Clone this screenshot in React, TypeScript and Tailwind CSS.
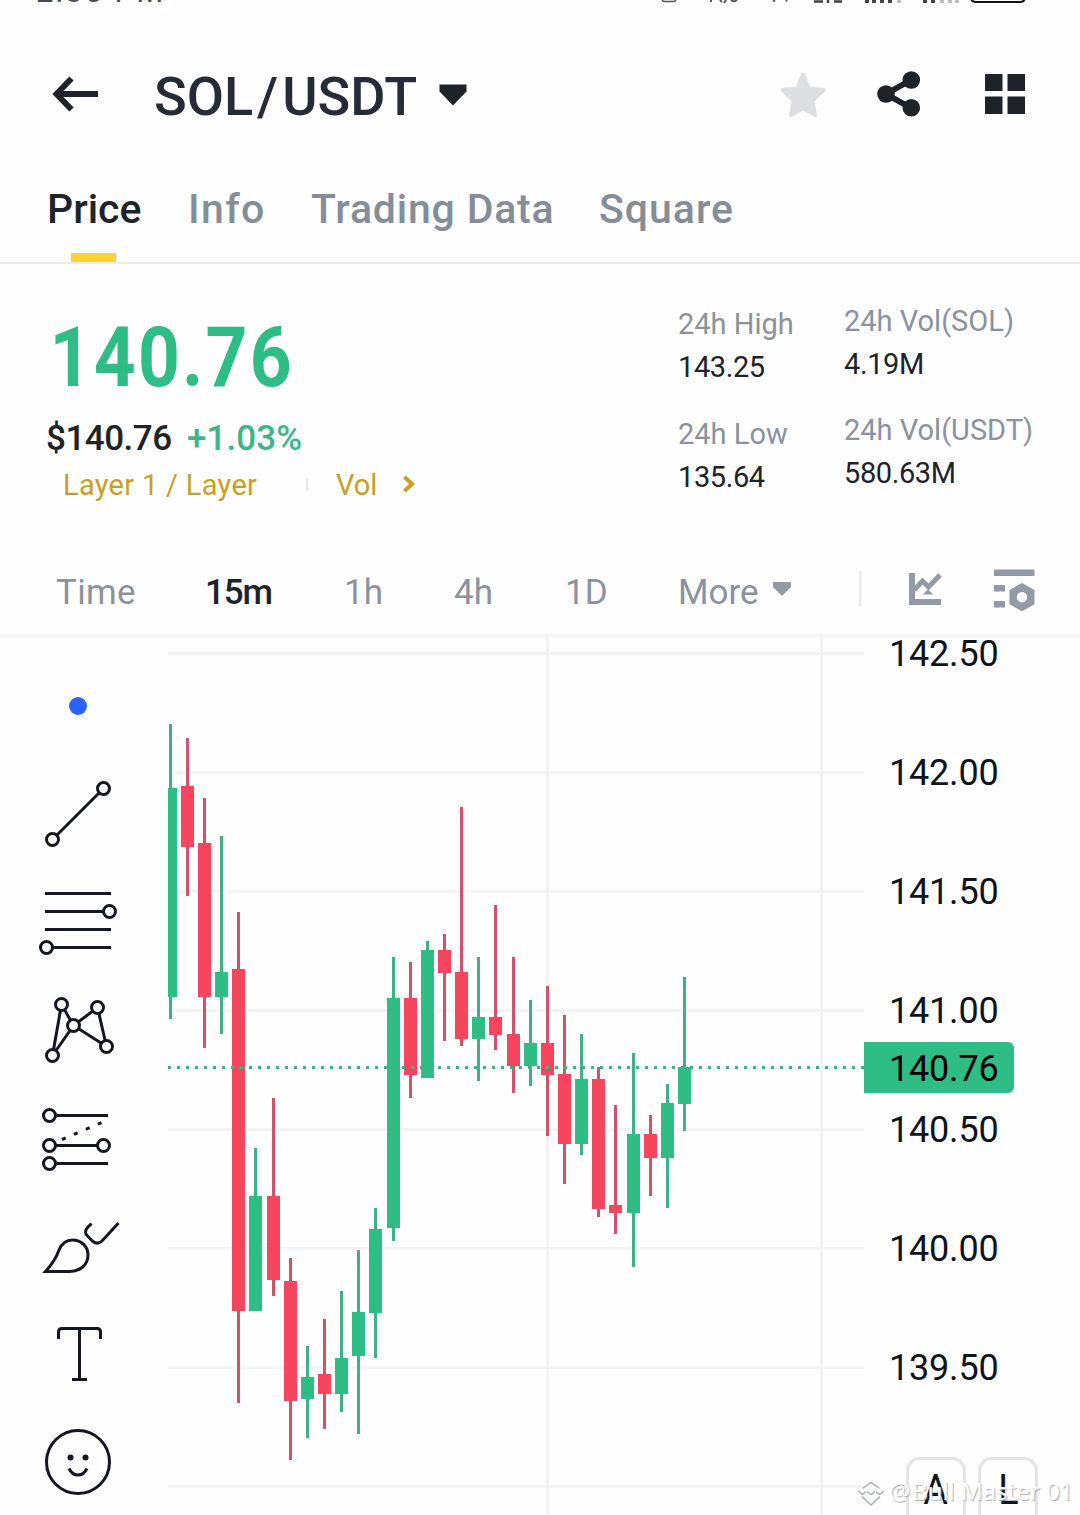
import { useState, type ReactNode } from 'react';
import clsx from 'clsx';

type Candle = { x: number; high: number; top: number; bottom: number; low: number; up: boolean };

const raw: [number, number, number, number, number, number][] = [
  [170.5, 724, 788, 997, 1019, 1],
  [187.5, 738, 786, 847, 896, 0],
  [204.5, 798, 843, 997, 1048, 0],
  [221.5, 836, 972, 997, 1034, 1],
  [238.5, 912, 969, 1311, 1403, 0],
  [255.5, 1148, 1196, 1311, 1311, 1],
  [273.5, 1098, 1196, 1280, 1296, 0],
  [290.5, 1258, 1281, 1401, 1460, 0],
  [307.5, 1346, 1377, 1399, 1438, 1],
  [324.5, 1319, 1374, 1394, 1429, 0],
  [341.5, 1291, 1358, 1394, 1412, 1],
  [358.5, 1250, 1312, 1356, 1434, 1],
  [375.5, 1208, 1229, 1313, 1358, 1],
  [393.5, 957, 998, 1228, 1241, 1],
  [410.5, 962, 998, 1075, 1098, 0],
  [427.5, 941, 950, 1078, 1078, 1],
  [444.5, 934, 950, 973, 1041, 0],
  [461.5, 807, 972, 1039, 1046, 0],
  [478.5, 957, 1017, 1039, 1081, 1],
  [495.5, 905, 1017, 1035, 1050, 0],
  [513.5, 957, 1034, 1066, 1093, 0],
  [530.5, 1000, 1043, 1066, 1086, 1],
  [547.5, 986, 1043, 1075, 1136, 0],
  [564.5, 1015, 1074, 1144, 1184, 0],
  [581.5, 1034, 1079, 1144, 1155, 1],
  [598.5, 1067, 1079, 1209, 1217, 0],
  [615.5, 1105, 1205, 1213, 1234, 0],
  [633.5, 1053, 1134, 1213, 1267, 1],
  [650.5, 1115, 1134, 1158, 1196, 0],
  [667.5, 1084, 1103, 1158, 1208, 1],
  [684.5, 977, 1067, 1104, 1131, 1],
];

const candles: Candle[] = raw.map(([x, high, top, bottom, low, up]) => ({ x, high, top, bottom, low, up: up === 1 }));

const gridLines = [652, 771, 890, 1009, 1128, 1247, 1366, 1485];
const priceLabels = ['142.50', '142.00', '141.50', '141.00', '140.50', '140.00', '139.50'];

const tabs = [
  { name: 'Price', className: 'w-[141px]' },
  { name: 'Info', className: 'w-[123px] tracking-[1.4px]' },
  { name: 'Trading Data', className: 'w-[288px] tracking-[0.8px]' },
  { name: 'Square', className: 'w-[145px] tracking-[1px]' },
];

const intervals = [
  { name: 'Time', className: 'w-[149px] tracking-[0.3px]' },
  { name: '15m', className: 'w-[139px] tracking-[-1.1px]' },
  { name: '1h', className: 'w-[110px]' },
  { name: '4h', className: 'w-[111px]' },
  { name: '1D', className: 'w-[113px]' },
];

export default function App() {
  return (
    <div className="relative flex h-[1515px] w-[1080px] flex-col overflow-hidden bg-[#fefefe] font-['Roboto',sans-serif] text-[#1e2329]">
      <StatusBar />
      <Header />
      <Tabs />
      <Summary />
      <Intervals />
      <section className="flex h-[877px] shrink-0">
        <DrawingTools />
        <CandleChart />
        <PriceAxis />
      </section>
      <Watermark />
    </div>
  );
}

function StatusBar() {
  return (
    <div className="flex h-2 shrink-0 items-start justify-between overflow-hidden pl-[36px] pr-[54px] text-[#4a4d52]">
      <span className="-mt-[25px] text-[31px] leading-[34px] tracking-[2.2px]">2:30 PM</span>
      <svg className="h-2 w-[366px]" viewBox="660 0 366 8" fill="none">
        <path d="M662 0q1 1.500 3 1.500h8q2 0 3-1.500" stroke="#55585d" strokeWidth="1.500" />
        <path d="M711 0v2M720 0l2 2M726 0l-2 3M731 0q3 2.500 6 0" stroke="#55585d" strokeWidth="2" />
        <path d="M773 0l2 1.500M787 0l-1 1.500" stroke="#55585d" strokeWidth="2" />
        <path d="M814 1.500h9M828 0v3M834 1.500h8" stroke="#3f4247" strokeWidth="2.500" />
        <path d="M867 0v3M874 0v3M882 0v3M890 0v3" stroke="#3f4247" strokeWidth="4" />
        <path d="M899 0v3M942 0v3M950 0v3M957 0v3" stroke="#b9bbbf" strokeWidth="4" />
        <path d="M925 0v3M933 0v3" stroke="#3f4247" strokeWidth="4" />
        <path d="M971 -4v1q0 5 5 5h44q5 0 5-5v-1" stroke="#111" strokeWidth="2" />
      </svg>
    </div>
  );
}

function Header() {
  return (
    <header className="flex h-[176px] shrink-0 items-center pl-[50px] pr-[54px]">
      <svg className="h-[176px] w-[104px]" viewBox="50 8 104 176" fill="none">
        <path d="M98 94H57M71.500 78.500 56.500 94l15 15.500" stroke="#1e2329" strokeWidth="6" />
      </svg>
      <h1 className="w-[285px] whitespace-nowrap text-[54px] font-medium text-[#252c38]">
        SOL<span className="mx-[4px]">/</span>USDT
      </h1>
      <svg className="h-[176px] w-[28px]" viewBox="439 8 28 176">
        <path d="M439.500 84.500h27v7l-13.500 14-13.500-14z" fill="#1e2329" />
      </svg>
      <svg className="ml-auto h-[176px] w-[246px]" viewBox="780 8 246 176">
        <path
          d="m803 74.500 5.500 14 15 1.500-11 10.500 2.500 14.500-12-7-12 7 2.500-14.500-11-10.500 15-1.500z"
          fill="#dcdee2"
          stroke="#dcdee2"
          strokeWidth="4"
          strokeLinejoin="round"
        />
        <path d="M911 80 886 94l25 14" fill="none" stroke="#1e2329" strokeWidth="6" />
        <g fill="#1e2329">
          <circle cx="911.300" cy="80" r="8.800" />
          <circle cx="886" cy="94" r="8.800" />
          <circle cx="911.300" cy="107.700" r="8.800" />
          <path d="M985 74h17.500v17H985zM1007.500 74h17.500v17h-17.500zM985 96.500h17.500v17.500H985zM1007.500 96.500h17.500v17.500h-17.500z" />
        </g>
      </svg>
    </header>
  );
}

function Tabs() {
  const [active, setActive] = useState('Price');

  return (
    <nav className="flex h-20 shrink-0 border-b-2 border-[#ebebec] pl-[47px] text-[41px] font-medium">
      {tabs.map((tab) => (
        <button
          key={tab.name}
          onClick={() => setActive(tab.name)}
          className={clsx('flex flex-col items-start justify-between whitespace-nowrap text-left', tab.className, {
            'text-[#1e2329]': active === tab.name,
            'text-[#858d99]': active !== tab.name,
          })}
        >
          <span className="leading-[51px]">{tab.name}</span>
          {active === tab.name && <span className="ml-[24px] h-[9px] w-[45px] bg-[#fcd535]" />}
        </button>
      ))}
    </nav>
  );
}

function Stat({ label, value }: { label: string; value: string }) {
  return (
    <div className="whitespace-nowrap text-[29px] leading-[43px]">
      <div className="text-[#8b929d]">{label}</div>
      <div className="tracking-[-0.4px]">{value}</div>
    </div>
  );
}

function Summary() {
  return (
    <section className="flex h-[284px] shrink-0 pt-8">
      <div className="w-[678px] pl-[46px]">
        <div className="h-[121px] origin-left scale-x-[0.88] whitespace-nowrap pl-[4px] text-[83px] font-bold leading-[124px] tracking-[2.6px] text-[#2ebd85]">
          140.76
        </div>
        <div className="flex h-[41px] items-center text-[35px] font-medium leading-[41px]">
          <span className="w-[141px] pt-px tracking-[-0.5px]">$140.76</span>
          <span className="pt-px tracking-[0.1px] text-[#3bb68a]">+1.03%</span>
        </div>
        <div className="flex h-[52px] items-center pl-[17px] text-[29px] text-[#c9a022]">
          <span className="w-[243px] whitespace-nowrap pt-[3px] tracking-[0.3px]">Layer 1 / Layer</span>
          <span className="h-[13px] w-[2px] bg-[#e6e7ea]" />
          <span className="ml-[28px] w-[67px] pt-[3px]">Vol</span>
          <svg className="h-[18px] w-[13px]" viewBox="0 0 13 18" fill="none">
            <path d="M1.500 2 9 9l-7.500 7" stroke="#c9a022" strokeWidth="4" />
          </svg>
        </div>
      </div>
      <div className="flex w-[166px] flex-col gap-6 pt-[7px]">
        <Stat label="24h High" value="143.25" />
        <Stat label="24h Low" value="135.64" />
      </div>
      <div className="flex flex-col gap-[23px] pt-[4px]">
        <Stat label="24h Vol(SOL)" value="4.19M" />
        <Stat label="24h Vol(USDT)" value="580.63M" />
      </div>
    </section>
  );
}

function Intervals() {
  const [active, setActive] = useState('15m');

  return (
    <div className="flex h-[90px] shrink-0 items-center border-b-4 border-[#f5f5f5] pl-[56px] text-[35px]">
      {intervals.map((item) => (
        <button
          key={item.name}
          onClick={() => setActive(item.name)}
          className={clsx(
            'pt-1 text-left',
            item.className,
            active === item.name ? 'font-medium text-[#1e2329]' : 'text-[#8b929d]',
          )}
        >
          {item.name}
        </button>
      ))}
      <button className="w-[95px] pt-1 text-left text-[#8b929d]">More</button>
      <svg className="h-[86px] w-[263px]" viewBox="773 548 263 86">
        <g fill="#929aa5">
          <path d="M773 582h18v5l-9 9-9-9z" />
          <path d="M909 573h6v26h26v6h-32zM928 589.500l5.500 5h-11z" />
          <path d="M994 569.500h40.500v6.500H994zM994 585h11v6.500h-11zM994 601h11v6.500h-11z" />
          <path fillRule="evenodd" d="m1022 583 12.500 7v14.200l-12.500 7.100-12.500-7.100V590zM1022 592a5.200 5.200 0 1 0 .01 0z" />
        </g>
        <path d="M914 590l8.500-9 6 6 11.500-12" fill="none" stroke="#929aa5" strokeWidth="5" />
        <path d="M859 571h2.500v35.500H859z" fill="#e9eaec" />
      </svg>
    </div>
  );
}

/* Every tool cell keeps the panel's vertical coordinates in its viewBox */
function Tool({ className, viewBox, children }: { className: string; viewBox: string; children: ReactNode }) {
  return (
    <svg className={clsx('w-[168px]', className)} viewBox={viewBox} fill="none" stroke="#131722" strokeWidth="3">
      {children}
    </svg>
  );
}

function Knob({ x, y }: { x: number; y: number }) {
  return <circle cx={x} cy={y} r="6" fill="#fefefe" />;
}

function DrawingTools() {
  return (
    <aside className="flex w-[168px] shrink-0 flex-col">
      <Tool className="h-[122px]" viewBox="0 638 168 122">
        <circle cx="78" cy="706" r="9" fill="#2962ff" stroke="none" />
      </Tool>
      <Tool className="h-[105px]" viewBox="0 760 168 105">
        <path d="M52.500 839.500l51-51" />
        <Knob x={52.5} y={839.5} />
        <Knob x={103.5} y={788.5} />
      </Tool>
      <Tool className="h-[110px]" viewBox="0 865 168 110">
        <path d="M45 893.500h66M45 911.500h66M45 929.500h66M45 947.500h66" />
        <Knob x={109.5} y={911.5} />
        <Knob x={46.5} y={947.5} />
      </Tool>
      <Tool className="h-[110px]" viewBox="0 975 168 110">
        <path d="M61.500 1004.500l-9 51 21-30zM73.500 1025.500l24-18 9 39z" />
        <Knob x={61.5} y={1004.5} />
        <Knob x={97.5} y={1007.5} />
        <Knob x={73.5} y={1025.5} />
        <Knob x={52.5} y={1055.5} />
        <Knob x={106.5} y={1046.5} />
      </Tool>
      <Tool className="h-[110px]" viewBox="0 1085 168 110">
        <path d="M49 1115.500h59M49 1145.500h54M49 1163.500h59" />
        <path d="M62 1139.500l42-18" strokeDasharray="4 9" />
        <Knob x={49.5} y={1115.5} />
        <Knob x={49.5} y={1145.5} />
        <Knob x={103.5} y={1145.5} />
        <Knob x={49.5} y={1163.5} />
      </Tool>
      <Tool className="h-[105px]" viewBox="0 1195 168 105">
        <path d="M91.500 1223.500 88 1227q-5 5 0 9.500l5 5q4.500 3.500 9-.5l16.500-18" />
        <path d="M45.500 1271.500C54 1262 57 1256 59 1250c3-7 7.500-10 13.500-10 9 0 15.500 6.500 15.500 15 0 10-8 16.500-19 16.500z" />
      </Tool>
      <Tool className="h-[110px]" viewBox="0 1300 168 110">
        <path d="M58.500 1339v-7q0-3.500 3.500-3.500h35q3.500 0 3.500 3.500v7M79.500 1328.500v51M72 1379.500h15" />
      </Tool>
      <Tool className="h-[105px]" viewBox="0 1410 168 105">
        <circle cx="78" cy="1462" r="31.500" />
        <circle cx="70.500" cy="1457.500" r="3" fill="#131722" stroke="none" />
        <circle cx="85.500" cy="1457.500" r="3" fill="#131722" stroke="none" />
        <path d="M69 1468.500q3 6.500 9 6.500t9-6.500" />
      </Tool>
    </aside>
  );
}

function CandleChart() {
  return (
    <svg className="-mt-1 h-[881px] w-[696px] shrink-0" viewBox="168 634 696 881" shapeRendering="crispEdges">
      <g fill="#f1f2f2">
        {gridLines.map((y) => (
          <rect key={y} x="168" y={y} width="696" height="3" opacity="0.85" />
        ))}
        <rect x="546" y="634" width="3" height="881" opacity="0.9" />
        <rect x="820" y="634" width="3" height="881" opacity="0.9" />
      </g>
      {candles.map((c) => (
        <g key={c.x}>
          <rect x={c.x - 1.5} y={c.high} width="3" height={c.low - c.high} fill={c.up ? '#3fb087' : '#d5506a'} />
          <rect x={c.x - 6.5} y={c.top} width="13" height={c.bottom - c.top} fill={c.up ? '#2ebd85' : '#f6465d'} />
        </g>
      ))}
      <path d="M168 1067.500h696" stroke="#3fb087" strokeWidth="3" strokeDasharray="3 6" />
    </svg>
  );
}

function PriceAxis() {
  return (
    <div className="relative flex w-[216px] flex-col text-[36px] text-[#0f131c]">
      <div className="flex flex-col gap-[87px] pl-[25px] tracking-[-0.2px]">
        {priceLabels.map((label) => (
          <span key={label} className="h-8 leading-8">
            {label}
          </span>
        ))}
      </div>
      {/* Last price marker */}
      <div className="absolute left-0 top-[404px] h-[51px] w-[150px] rounded-r-[6px] bg-[#2ebd85] pl-[25px] leading-[54px] tracking-[-0.2px] text-black">
        140.76
      </div>
      <div className="mt-auto flex h-[58px] gap-[12px] overflow-hidden pl-[42px] text-[42px] leading-[60px]">
        <button className="h-[72px] w-[60px] shrink-0 rounded-[14px] border-3 border-[#e3e4ea] pb-[11px]">
          <span className="inline-block scale-x-90">A</span>
        </button>
        <button className="h-[72px] w-[60px] shrink-0 rounded-[14px] border-3 border-[#e3e4ea] pb-[11px]">
          <span className="inline-block scale-x-90">L</span>
        </button>
      </div>
    </div>
  );
}

function Watermark() {
  return (
    <div className="absolute bottom-[7px] left-[857px] flex h-[34px] items-center font-['Noto_Sans',sans-serif] text-[24px] text-white [text-shadow:1px_1px_1px_#a4a8b0]">
      <svg className="mr-1 mt-[6px] h-[26px] w-[28px]" viewBox="0 0 28 26" fill="none" stroke="#a9adb5" strokeWidth="1.500">
        <path d="M5.500 7.500 14 1.500l8.500 6M1 10l4.500 3.500L9 10.500M10 10.500l4 3 4-3M19 10.500l3.500 3L27 10M5 15.500l9 8.500 9-8.500" />
      </svg>
      <span className="w-[23px]">@</span>
      <span className="whitespace-nowrap">Bull Master 01</span>
    </div>
  );
}
